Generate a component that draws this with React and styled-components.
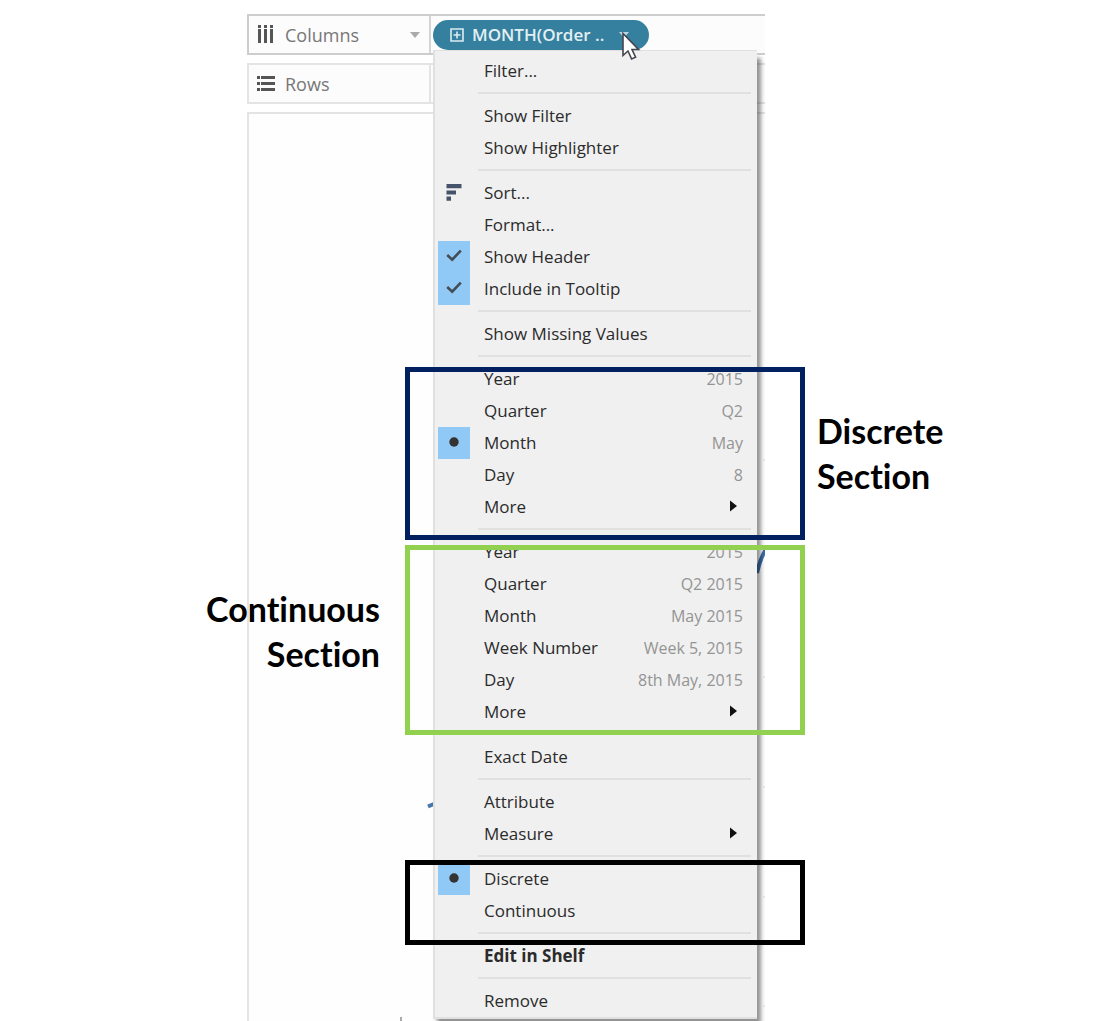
import React from "react";
import styled, { createGlobalStyle } from "styled-components";

const GlobalStyle = createGlobalStyle`
  * {
    box-sizing: border-box;
  }

  body {
    margin: 0;
    background-color: #fff;
    font-family: "Open Sans", "Noto Sans", sans-serif;
  }

  button {
    font: inherit;
    color: inherit;
    border: 0;
    background: none;
    cursor: pointer;
  }
`;

const Page = styled.main`
  display: flex;
  min-height: 100vh;
  padding: 14px 24px 0 247px;
`;

const Worksheet = styled.div`
  display: flex;
  flex-direction: column;
  gap: 8px;
  flex: 1;
  max-width: 518px;
`;

const Shelf = styled.section`
  display: flex;
  min-height: 41px;
  border: 2px solid ${({ $active }) => ($active ? "#cdcdcd" : "#e4e4e4")};
  border-right: 0;
  background-color: #fcfcfc;
`;

const ShelfLabel = styled.div`
  display: flex;
  align-items: center;
  gap: 9px;
  width: 182px;
  padding: 0 9px 0 7px;
  border-right: 2px solid ${({ $active }) => ($active ? "#d4d4d4" : "#e4e4e4")};
  font-size: 18px;
  line-height: 24px;
  color: #777;

  .caret {
    margin-left: auto;
  }
`;

const ShelfFields = styled.div`
  flex: 1;
  padding: 4px 2px 3px;
`;

const PillWrapper = styled.div`
  position: relative;
  width: 216px;
`;

const Pill = styled.button`
  display: flex;
  align-items: center;
  gap: 8px;
  width: 100%;
  height: 30px;
  padding: 0 20px 0 17px;
  border-radius: 15px;
  background-color: #35809e;
  color: #e3eff4;
  font-size: 17px;
  font-weight: 600;
  line-height: 28px;
  white-space: nowrap;

  .caret {
    margin-left: auto;
  }
`;

const Cursor = styled.svg`
  position: absolute;
  z-index: 3;
  left: 188px;
  top: 12px;
`;

const Canvas = styled.section`
  flex: 1;
  border: 2px solid #e4e4e4;
  border-right: 0;
  border-bottom: 0;
  background-color: #fefefe;

  svg {
    display: block;
  }
`;

const Menu = styled.div`
  position: absolute;
  z-index: 2;
  top: 100%;
  left: 0;
  width: 324px;
  padding: 4px 0 0;
  border: solid #e0e0e0;
  border-width: 1px 0 2px 2px;
  background-color: #f0f0f0;
  box-shadow: 4px 8px 4px rgba(0, 0, 0, 0.42);
  color: #2b2b2b;
  font-size: 17px;
  line-height: 24px;
`;

const MenuGroup = styled.div`
  position: relative;

  & + &::before {
    content: "";
    display: block;
    height: 2px;
    margin: 0 6px 6px 43px;
    background-color: #e0e0e0;
  }

  & + & {
    padding-top: 5px;
  }
`;

const Item = styled.button`
  display: grid;
  grid-template-columns: 32px 1fr auto;
  column-gap: 14px;
  align-items: center;
  width: 100%;
  height: 32px;
  padding: 0 14px 0 3px;
  text-align: left;
  white-space: nowrap;
  font-weight: ${({ $strong }) => ($strong ? 700 : 400)};

  .arrow {
    margin-right: 6px;
  }
`;

const Gutter = styled.span`
  display: flex;
  align-items: center;
  justify-content: center;
  align-self: stretch;
  background-color: ${({ $on }) => ($on ? "#90c8f6" : "transparent")};
`;

const Hint = styled.span`
  color: #949494;
  font-size: 16px;
`;

const Frame = styled.div`
  position: absolute;
  z-index: 4;
  top: ${({ $top }) => $top}px;
  bottom: ${({ $bottom }) => $bottom}px;
  left: -30px;
  right: -48px;
  border: 5px solid ${({ $color }) => $color};
  pointer-events: none;
`;

const Callout = styled.p`
  position: absolute;
  top: 36px;
  ${({ $side }) =>
    $side === "left"
      ? "right: calc(100% + 30px); text-align: right;"
      : "left: calc(100% + 17px);"}
  margin: 0;
  color: #000;
  font-family: Lato, sans-serif;
  font-size: 34px;
  font-weight: 700;
  font-variant-ligatures: none;
  line-height: 45px;
`;

const GROUPS = [
  { items: [{ label: "Filter..." }] },
  { items: [{ label: "Show Filter" }, { label: "Show Highlighter" }] },
  {
    items: [
      { label: "Sort...", mark: "sort" },
      { label: "Format..." },
      { label: "Show Header", mark: "check" },
      { label: "Include in Tooltip", mark: "check" }
    ]
  },
  { items: [{ label: "Show Missing Values" }] },
  {
    frame: { color: "#002060", top: 17, bottom: -17 },
    callout: { side: "right", lines: ["Discrete", "Section"] },
    items: [
      { label: "Year", hint: "2015" },
      { label: "Quarter", hint: "Q2" },
      { label: "Month", hint: "May", mark: "dot" },
      { label: "Day", hint: "8" },
      { label: "More", submenu: true }
    ]
  },
  {
    frame: { color: "#92d050", top: 22, bottom: -7 },
    callout: { side: "left", lines: ["Continuous", "Section"] },
    items: [
      { label: "Year", hint: "2015" },
      { label: "Quarter", hint: "Q2 2015" },
      { label: "Month", hint: "May 2015" },
      { label: "Week Number", hint: "Week 5, 2015" },
      { label: "Day", hint: "8th May, 2015" },
      { label: "More", submenu: true }
    ]
  },
  { items: [{ label: "Exact Date" }] },
  { items: [{ label: "Attribute" }, { label: "Measure", submenu: true }] },
  {
    frame: { color: "#000", top: 10, bottom: -18 },
    items: [{ label: "Discrete", mark: "dot" }, { label: "Continuous" }]
  },
  { items: [{ label: "Edit in Shelf", strong: true }] },
  { items: [{ label: "Remove" }] }
];

function Mark({ type }) {
  if (type === "check") {
    return (
      <svg width="16" height="16" viewBox="0 0 16 16">
        <path d="M1.2 6l5 4.6L14.8 1.6" fill="none" stroke="#444d54" strokeWidth="2.6" />
      </svg>
    );
  }
  if (type === "dot") {
    return (
      <svg width="10" height="12" viewBox="0 0 10 12">
        <circle cx="5" cy="5" r="4.7" fill="#333" />
      </svg>
    );
  }
  if (type === "sort") {
    return (
      <svg width="16" height="19" viewBox="0 0 16 19" fill="#46536a">
        <path d="M0.5 0h15v4.2h-15zM0.5 6.4h9.5v4.2h-9.5zM0.5 12.6h4.5v4.2h-4.5z" />
      </svg>
    );
  }
  return null;
}

function Caret({ color }) {
  return (
    <svg className="caret" width="10" height="6" viewBox="0 0 10 6">
      <path d="M0 0h10L5 6z" fill={color} />
    </svg>
  );
}

function MenuItem({ label, hint, mark, submenu, strong }) {
  return (
    <Item type="button" role="menuitem" $strong={strong}>
      <Gutter $on={mark === "check" || mark === "dot"}>
        <Mark type={mark} />
      </Gutter>
      <span>{label}</span>
      {hint && <Hint>{hint}</Hint>}
      {submenu && (
        <svg className="arrow" width="7" height="14" viewBox="0 0 7 14">
          <path d="M0 0.5L7 6L0 11.5z" fill="#111" />
        </svg>
      )}
    </Item>
  );
}

function FieldMenu() {
  return (
    <Menu role="menu" aria-label="Field options">
      {GROUPS.map(({ items, frame, callout }, index) => (
        <MenuGroup key={index}>
          {items.map(item => (
            <MenuItem key={item.label} {...item} />
          ))}
          {frame && (
            <Frame $color={frame.color} $top={frame.top} $bottom={frame.bottom}>
              {callout && (
                <Callout $side={callout.side}>
                  {callout.lines[0]}
                  <br />
                  {callout.lines[1]}
                </Callout>
              )}
            </Frame>
          )}
        </MenuGroup>
      ))}
    </Menu>
  );
}

export default function App() {
  return (
    <>
      <GlobalStyle />
      <Page>
        <Worksheet>
          <Shelf $active>
            <ShelfLabel $active>
              <svg width="20" height="20" viewBox="0 0 20 20" fill="#555">
                <path d="M2 0h3v3H2zM2 4h3v14H2zM8 0h3v3H8zM8 4h3v14H8zM14 0h3v3h-3zM14 4h3v14h-3z" />
              </svg>
              Columns
              <Caret color="#aaa" />
            </ShelfLabel>
            <ShelfFields>
              <PillWrapper>
                <Pill type="button" aria-haspopup="menu" aria-expanded="true">
                  <svg width="14" height="14" viewBox="0 0 14 14" fill="none" stroke="#dcebf1">
                    <path d="M1 1h12v12H1zM7 3.5v7M3.5 7h7" strokeWidth="1.6" />
                  </svg>
                  MONTH(Order ..
                  <Caret color="#b9d6e1" />
                </Pill>
                <Cursor width="20" height="30" viewBox="0 0 20 30">
                  <path
                    d="M2 1.5v22l5-4.5 3.6 8 4-1.8-3.6-7.7h6.5z"
                    fill="#fff"
                    stroke="#45454f"
                    strokeWidth="1.6"
                  />
                </Cursor>
                <FieldMenu />
              </PillWrapper>
            </ShelfFields>
          </Shelf>
          <Shelf>
            <ShelfLabel>
              <svg width="20" height="20" viewBox="0 0 20 20" fill="#555">
                <path d="M1 2h3v3H1zM5 2h14v3H5zM1 8h3v3H1zM5 8h14v3H5zM1 14h3v3H1zM5 14h14v3H5z" />
              </svg>
              Rows
            </ShelfLabel>
            <ShelfFields />
          </Shelf>
          <Canvas>
            {/* the parts of the line chart that the menu leaves uncovered */}
            <svg width="516" height="907" viewBox="249 114 516 907" fill="none">
              <path d="M428 806.5l7-3" stroke="#4577ac" strokeWidth="4" />
              <path d="M757 573q3-14 9-24" stroke="#3a6ea5" strokeWidth="4" />
              <path d="M401 1017v4" stroke="#aaa" strokeWidth="2" />
              <path d="M763 460h3M763 677h3M763 787h3M763 897h3M763 1006h3" stroke="#eee" strokeWidth="2" />
            </svg>
          </Canvas>
        </Worksheet>
      </Page>
    </>
  );
}
